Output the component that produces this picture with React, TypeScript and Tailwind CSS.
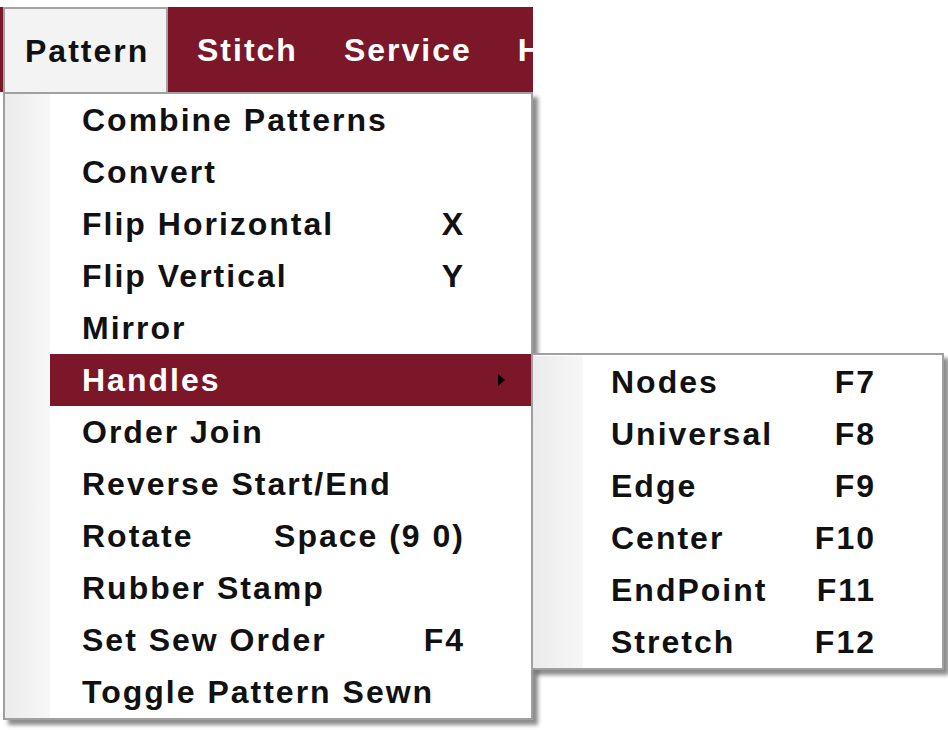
const mainItems: Array<{ label: string; key?: string; sub?: boolean }> = [
  { label: 'Combine Patterns' },
  { label: 'Convert' },
  { label: 'Flip Horizontal', key: 'X' },
  { label: 'Flip Vertical', key: 'Y' },
  { label: 'Mirror' },
  { label: 'Handles', sub: true },
  { label: 'Order Join' },
  { label: 'Reverse Start/End' },
  { label: 'Rotate', key: 'Space (9 0)' },
  { label: 'Rubber Stamp' },
  { label: 'Set Sew Order', key: 'F4' },
  { label: 'Toggle Pattern Sewn' },
]

const handleItems = [
  { label: 'Nodes', key: 'F7' },
  { label: 'Universal', key: 'F8' },
  { label: 'Edge', key: 'F9' },
  { label: 'Center', key: 'F10' },
  { label: 'EndPoint', key: 'F11' },
  { label: 'Stretch', key: 'F12' },
]

export default function App() {
  return (
    <div className="relative w-[948px] h-[730px] bg-white overflow-hidden font-['Liberation_Sans',Arial,sans-serif] font-bold text-[32px] tracking-[2px] leading-none text-[#111]">
      {/* menu bar */}
      <div className="mt-[7px] flex h-[85px] w-[533px] overflow-hidden bg-[#7b1729] text-white">
        <div className="ml-[3px] flex w-[165px] shrink-0 items-center border-2 border-b-0 border-[#a3a3a3] bg-[#f3f3f3] pl-[20px] text-[#111]">
          Pattern
        </div>
        <div className="flex items-center gap-[46px] pl-[29px] whitespace-nowrap">
          <span>Stitch</span>
          <span>Service</span>
          <span>Help</span>
        </div>
      </div>

      {/* dropdown */}
      <div className="absolute left-[3px] top-[92px] w-[530px] border-2 border-[#a0a0a0] bg-white shadow-[5px_5px_4px_rgba(0,0,0,0.45)]">
        {mainItems.map((item) => {
          const active = item.sub
          return (
            <div key={item.label} className="flex h-[52px]">
              <div className="w-[45px] shrink-0 bg-gradient-to-r from-[#ebebeb] to-[#f7f7f7]" />
              <div
                className={`flex flex-1 items-center justify-between pl-[32px] pr-[66px] whitespace-nowrap ${
                  active ? 'bg-[#7b1729] text-white' : ''
                }`}
              >
                <span>{item.label}</span>
                {item.key && <span>{item.key}</span>}
                {item.sub && (
                  <svg className="-mr-[40px]" width="7" height="12" viewBox="0 0 7 12">
                    <path d="M0 0 L7 6 L0 12 Z" fill="#000" />
                  </svg>
                )}
              </div>
            </div>
          )
        })}
      </div>

      {/* submenu */}
      <div className="absolute left-[531px] top-[353px] w-[413px] border-2 border-[#a0a0a0] bg-white pt-[1px] shadow-[5px_5px_4px_rgba(0,0,0,0.45)]">
        {handleItems.map((item) => (
          <div key={item.label} className="flex h-[52px]">
            <div className="w-[50px] shrink-0 bg-gradient-to-r from-[#ebebeb] to-[#f7f7f7]" />
            <div className="flex flex-1 items-center justify-between pl-[28px] pr-[66px] whitespace-nowrap">
              <span>{item.label}</span>
              <span>{item.key}</span>
            </div>
          </div>
        ))}
      </div>
    </div>
  )
}
